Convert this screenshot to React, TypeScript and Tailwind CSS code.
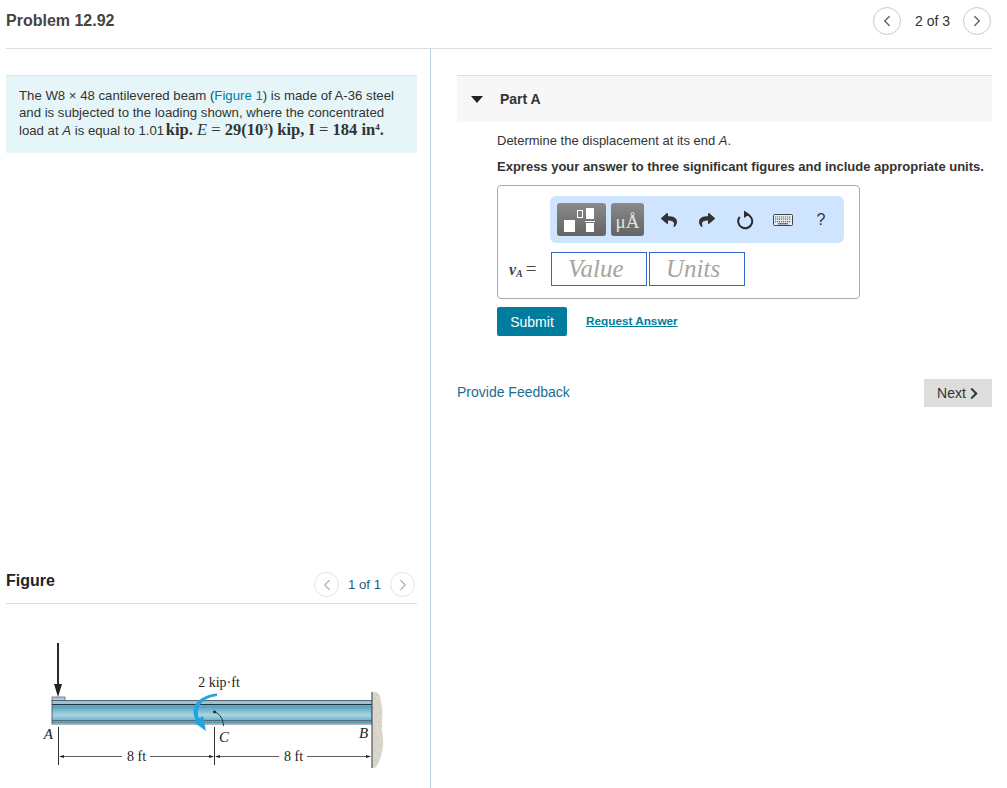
import React from 'react';
import { ChevronLeft, ChevronRight } from 'lucide-react';
import { FaReply, FaShare, FaChevronRight } from 'react-icons/fa';

const sans = { fontFamily: '"Liberation Sans", Arial, sans-serif' };
const serif = { fontFamily: '"Liberation Serif", "Times New Roman", serif' };

const Pager: React.FC<{ label: string; muted?: boolean }> = ({ label, muted }) => (
  <div className="flex items-center">
    <button className={`flex items-center justify-center rounded-full border ${muted ? 'w-[25px] h-[25px] border-[#e4e4e4] text-[#b5b5b5]' : 'w-[28px] h-[28px] border-[#c8c8c8] text-[#55606c]'}`}>
      <ChevronLeft className="w-[18px] h-[18px]" strokeWidth={1.75} />
    </button>
    <span className={muted ? 'mx-[9px] text-[13.2px] text-[#1c5a85]' : 'ml-[14px] mr-[13px] text-[14px] text-[#333]'}>{label}</span>
    <button className={`flex items-center justify-center rounded-full border ${muted ? 'w-[25px] h-[25px] border-[#e4e4e4] text-[#b5b5b5]' : 'w-[28px] h-[28px] border-[#c8c8c8] text-[#55606c]'}`}>
      <ChevronRight className="w-[18px] h-[18px]" strokeWidth={1.75} />
    </button>
  </div>
);

// speckles on the wall hatch
const wallDots: [number, number][] = [
  [375, 698], [378, 704], [380, 712], [376, 716], [379, 722], [375, 728], [381, 733], [377, 738],
  [380, 745], [375, 750], [378, 755], [376, 760], [374, 708], [382, 726], [377, 695], [374, 742],
];

const BeamFigure: React.FC = () => (
  <svg width="370" height="140" viewBox="30 635 370 140" className="block">
    <defs>
      <linearGradient id="web" x1="0" y1="0" x2="0" y2="1">
        <stop offset="0" stopColor="#4b9ab8" />
        <stop offset="0.65" stopColor="#a9d6e4" />
        <stop offset="1" stopColor="#6fb2ca" />
      </linearGradient>
    </defs>
    {/* load arrow */}
    <line x1="58" y1="643" x2="58" y2="688" stroke="#2b2b2b" strokeWidth="2" />
    <path d="M54 684 L62 684 L58 697 Z" fill="#222" />
    <rect x="52" y="697" width="13" height="4" fill="#a6cedc" stroke="#4d5a60" strokeWidth="0.7" />
    {/* beam */}
    <rect x="52" y="700.5" width="320" height="3.5" fill="#9dc3d3" />
    <rect x="52" y="704" width="320" height="1.3" fill="#1f3640" />
    <rect x="52" y="705.3" width="320" height="15" fill="url(#web)" />
    <rect x="52" y="720.3" width="320" height="0.9" fill="#1f3640" />
    <rect x="52" y="721.2" width="320" height="2" fill="#4e9ab6" />
    <rect x="52" y="700.5" width="320" height="23.5" fill="none" stroke="#4d5a60" strokeWidth="0.9" />
    {/* wall */}
    <path d="M372 692 C378 691 381 695 381 702 C384 712 381 722 382 732 C385 742 382 756 378 764 C376 768 374 768 372 768 Z" fill="#d9d6cc" />
    {wallDots.map(([x, y]) => (
      <circle key={`${x}-${y}`} cx={x} cy={y} r="0.5" fill="#a9a69b" />
    ))}
    <line x1="372" y1="692" x2="372" y2="768" stroke="#555" strokeWidth="1.2" />
    {/* dimension lines */}
    <line x1="58.5" y1="727" x2="58.5" y2="765" stroke="#333" strokeWidth="1" />
    <line x1="214.5" y1="727" x2="214.5" y2="765" stroke="#333" strokeWidth="1" />
    <line x1="60" y1="756.5" x2="122" y2="756.5" stroke="#333" strokeWidth="0.8" />
    <line x1="150" y1="756.5" x2="213" y2="756.5" stroke="#333" strokeWidth="0.8" />
    <line x1="216" y1="756.5" x2="279" y2="756.5" stroke="#333" strokeWidth="0.8" />
    <line x1="307" y1="756.5" x2="370" y2="756.5" stroke="#333" strokeWidth="0.8" />
    <path d="M59 756.5 L64 755 L64 758 Z M214 756.5 L209 755 L209 758 Z M215 756.5 L220 755 L220 758 Z M371 756.5 L366 755 L366 758 Z" fill="#222" />
    {/* moment */}
    <path d="M217 693.5 C202 695 193 703 193.5 713 C194 716 195 719 197 722 L200 720 C197.5 716 197 711 200 705 C204 699 210 697 217 696 Z" fill="#1fa6e0" />
    <path d="M206 731 L193.5 722 L203 716 Z" fill="#1fa6e0" />
    <circle cx="214.5" cy="712" r="1.4" fill="#222" />
    <path d="M215 712 C220 714 223 719 223.5 726" fill="none" stroke="#222" strokeWidth="0.9" />
    {/* labels */}
    <g style={serif} fill="#222" fontSize="14">
      <text x="219" y="687" textAnchor="middle">2 kip·ft</text>
      <text x="136.5" y="761" textAnchor="middle">8 ft</text>
      <text x="293.5" y="761" textAnchor="middle">8 ft</text>
      <text x="53" y="739" textAnchor="end" fontStyle="italic" fontSize="15">A</text>
      <text x="219" y="742" fontStyle="italic" fontSize="15">C</text>
      <text x="359" y="738" fontStyle="italic" fontSize="15">B</text>
    </g>
  </svg>
);

const KeyboardIcon: React.FC = () => (
  <svg width="20" height="12" viewBox="0 0 20 12">
    <rect x="0.5" y="0.5" width="19" height="11" rx="1" fill="#e8eef5" stroke="#444" />
    <path d="M2 3h16M2 5.2h16" stroke="#666" strokeWidth="1.2" strokeDasharray="1.2 0.8" />
    <path d="M2 7.6h16" stroke="#666" strokeWidth="1.2" strokeDasharray="1.2 0.8" />
    <path d="M5 9.8h10" stroke="#555" strokeWidth="1.2" />
  </svg>
);

const ResetIcon: React.FC = () => (
  <svg width="18" height="20" viewBox="0 0 18 20">
    <path d="M10 4.3 A7 7 0 1 1 3.8 6.8" fill="none" stroke="#2b2b2b" strokeWidth="2" />
    <path d="M8 0.5 L13.5 4.3 L8 8 Z" fill="#2b2b2b" />
  </svg>
);

const TemplatesIcon: React.FC = () => (
  <svg width="37" height="28" viewBox="0 0 37 28">
    <rect x="1" y="14" width="11" height="12" fill="#fff" />
    <rect x="14.5" y="4.5" width="5" height="7" fill="none" stroke="#fff" />
    <rect x="23" y="2" width="8" height="11" fill="#fff" />
    <rect x="22" y="15" width="10" height="1" fill="#fff" />
    <rect x="23" y="17" width="8" height="9" fill="#fff" />
  </svg>
);

const App: React.FC = () => {
  return (
    <div className="w-[1007px] h-[788px] overflow-hidden bg-white text-[#333] flex flex-col" style={sans}>
      {/* Header */}
      <div className="ml-[6px] w-[986px] h-[49px] shrink-0 flex items-start justify-between border-b border-[#ddd]">
        <h1 className="mt-[12px] text-[16px] leading-[18px] font-bold text-[#444]">Problem 12.92</h1>
        <div className="mt-[7px] mr-[1px]">
          <Pager label="2 of 3" />
        </div>
      </div>

      <div className="flex flex-1 min-h-0">
        {/* Left column */}
        <div className="w-[431px] shrink-0 border-r border-[#b9d3e6] pl-[6px] pr-[13px] flex flex-col">
          <div className="mt-[26px] h-[78px] bg-[#e6f6f8] border-t border-[#dfe6ea] pl-[13px] pt-[12px] text-[13.2px] leading-[16.8px] text-[#333] whitespace-nowrap">
            <p>
              The W8 × 48 cantilevered beam (<span className="text-[#007c9e]">Figure 1</span>) is made of A-36 steel
              <br />
              and is subjected to the loading shown, where the concentrated
              <br />
              load at <i>A</i> is equal to 1.01{' '}
              <span className="-ml-[2px] text-[16.5px] font-bold" style={serif}>
                kip. <i className="font-normal">E</i> <span className="font-normal">=</span> 29(10<sup className="text-[9px]">3</sup>) kip, I <span className="font-normal">=</span> 184 in<sup className="text-[9px]">4</sup>.
              </span>
            </p>
          </div>

          <div className="mt-[414px] h-[37px] flex items-center justify-between border-b border-[#ddd]">
            <h2 className="text-[16px] font-bold text-[#222] -mt-[9px]">Figure</h2>
            <div className="mr-[2px] -mt-[1px]">
              <Pager label="1 of 1" muted />
            </div>
          </div>

          <div className="mt-[31px] ml-[24px]">
            <BeamFigure />
          </div>
        </div>

        {/* Right column */}
        <div className="flex-1 pl-[26px] pr-[15px] flex flex-col">
          <div className="mt-[26px] h-[47px] shrink-0 bg-[#f7f7f7] border-t border-[#ddd] flex items-center">
            <span className="ml-[14px] w-0 h-0 border-l-[6px] border-r-[6px] border-t-[7px] border-l-transparent border-r-transparent border-t-[#222]" />
            <h3 className="ml-[17px] text-[14px] font-bold text-[#333]">Part A</h3>
          </div>

          <div className="ml-[40px] flex flex-col items-start">
            <p className="mt-[11px] text-[13px] leading-[16px]">
              Determine the displacement at its end <i>A</i>.
            </p>
            <p className="mt-[10px] text-[13px] leading-[16px] font-bold whitespace-nowrap">
              Express your answer to three significant figures and include appropriate units.
            </p>

            {/* Answer box */}
            <div className="mt-[10px] w-[363px] h-[114px] border border-[#aaa] rounded-[4px] pt-[10px] pl-[11px]">
              <div className="ml-[41px] w-[294px] h-[47px] bg-[#cfe4ff] rounded-[6px] flex items-center pl-[7px]">
                <button className="w-[49px] h-[33px] rounded-[3px] bg-gradient-to-b from-[#8a8a8a] to-[#646464] flex items-center justify-center">
                  <TemplatesIcon />
                </button>
                <button className="ml-[5px] w-[33px] h-[33px] rounded-[3px] bg-gradient-to-b from-[#8a8a8a] to-[#646464] text-[#e4e4e4] text-[19px] leading-none pt-[3px] flex items-center justify-center" style={serif}>
                  μÅ
                </button>
                <div className="ml-[15px] w-[20px] flex justify-center text-[#333]"><FaReply className="w-[16px] h-[16px]" /></div>
                <div className="ml-[18px] w-[20px] flex justify-center text-[#333]"><FaShare className="w-[16px] h-[16px]" /></div>
                <div className="ml-[18px] w-[20px] flex justify-center"><ResetIcon /></div>
                <div className="ml-[18px] w-[20px] flex justify-center"><KeyboardIcon /></div>
                <div className="ml-[18px] w-[20px] text-center text-[16px] text-[#333]">?</div>
              </div>

              <div className="mt-[9px] flex items-center">
                <span className="w-[42px] shrink-0 text-[16px] text-[#444] whitespace-nowrap" style={serif}>
                  <b><i>v<sub className="text-[10px]">A</sub></i></b>
                  <span className="ml-[3px] text-[19px]">=</span>
                </span>
                <input placeholder="Value" className="w-[96px] h-[34px] border border-[#3366cc] pl-[16px] text-[25px] italic outline-none placeholder:text-[#a8a49c]" style={serif} />
                <input placeholder="Units" className="ml-[2px] w-[96px] h-[34px] border border-[#3366cc] pl-[16px] text-[25px] italic outline-none placeholder:text-[#a8a49c]" style={serif} />
              </div>
            </div>

            <div className="mt-[8px] flex items-center">
              <button className="w-[70px] h-[29px] pt-[2px] rounded-[2px] bg-[#007c9e] text-white text-[14px]">Submit</button>
              <a className="ml-[19px] -mt-[2px] text-[11.75px] font-bold underline text-[#007c9e]">Request Answer</a>
            </div>
          </div>

          <div className="mt-[43px] flex items-center justify-between">
            <a className="-mt-[2px] text-[14px] text-[#1c6c93]">Provide Feedback</a>
            <button className="w-[68px] h-[28px] bg-[#ddd] text-[14px] text-[#333] flex items-center justify-center gap-[3px]">
              Next
              <FaChevronRight className="w-[10px] h-[13px]" />
            </button>
          </div>
        </div>
      </div>
    </div>
  );
};

export default App;
